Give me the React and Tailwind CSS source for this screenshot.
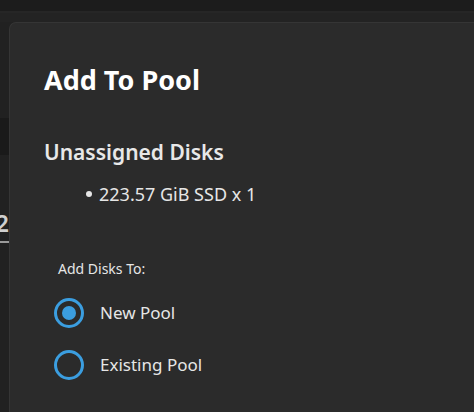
import React, { useState } from 'react';

const font = { fontFamily: '"Noto Sans", "Open Sans", sans-serif' };

function Radio({ checked, label, onSelect }) {
  return (
    <button
      type="button"
      onClick={onSelect}
      className="flex items-center gap-[16px] text-left"
    >
      <span className="w-[30px] h-[30px] rounded-full border-[3px] border-[#3b9ee0] flex items-center justify-center">
        {checked && <span className="w-[14px] h-[14px] rounded-full bg-[#3b9ee0]" />}
      </span>
      <span className="text-[17px] leading-[24px] text-[#e6e6e6]">{label}</span>
    </button>
  );
}

export default function App() {
  const [target, setTarget] = useState('new');

  return (
    <div className="w-[474px] h-[412px] overflow-hidden bg-[#212121] flex flex-col" style={font}>
      {/* page header behind the dialog */}
      <div className="h-[13px] bg-[#1c1c1c] border-b-2 border-[#262626] shrink-0" />
      <div className="h-[9px] bg-[#232323] shrink-0" />

      <div className="flex flex-1 min-h-0">
        {/* sliver of the page on the left */}
        <div className="w-[9px] shrink-0 flex flex-col">
          <div className="h-[96px]" />
          <div className="h-[37px] bg-[#1a1a1a]" />
          <div className="h-[52px]" />
          <div className="h-[32px] overflow-hidden relative">
            <span className="absolute right-0 top-0 text-[24px] leading-[32px] text-[#cfcfcf] font-semibold">2</span>
          </div>
          <div className="h-[2px] bg-[#9a9a9a] mt-[2px]" />
        </div>

        {/* dialog */}
        <div className="flex-1 bg-[#2b2b2b] rounded-tl-[7px] border-l border-t border-[#353535] pl-[34px] pt-[38px]">
          <h1 className="text-[27px] leading-[38px] font-bold text-white">Add To Pool</h1>

          <h2 className="mt-[39px] text-[21px] leading-[28px] font-semibold text-[#e8e8e8]">Unassigned Disks</h2>
          <ul className="mt-[16px] ml-[42px] text-[18px] leading-[24px] text-[#e6e6e6]">
            <li className="flex items-center gap-[7px]">
              <span className="w-[6px] h-[6px] rounded-full bg-[#e6e6e6]" />
              223.57 GiB SSD x 1
            </li>
          </ul>

          <div className="mt-[53px] ml-[14px]">
            <div className="text-[14px] leading-[20px] text-[#e6e6e6]">Add Disks To:</div>
            <div className="mt-[19px] ml-[-4px] flex flex-col gap-[22px]">
              <Radio checked={target === 'new'} label="New Pool" onSelect={() => setTarget('new')} />
              <Radio checked={target === 'existing'} label="Existing Pool" onSelect={() => setTarget('existing')} />
            </div>
          </div>
        </div>
      </div>
    </div>
  );
}
